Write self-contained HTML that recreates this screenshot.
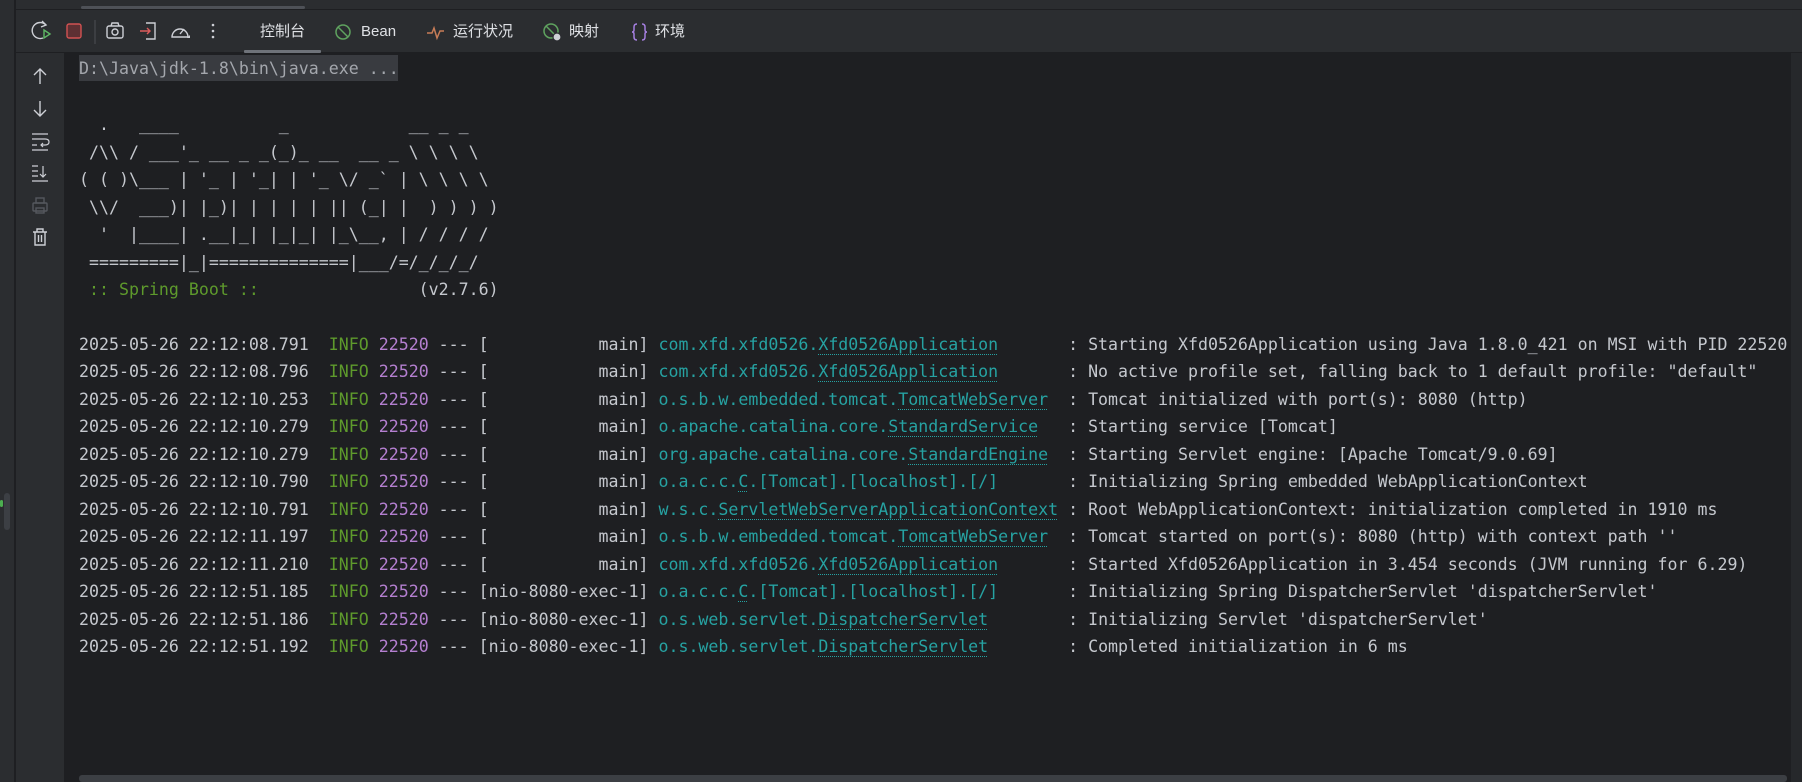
<!DOCTYPE html>
<html><head><meta charset="utf-8"><style>
*{margin:0;padding:0;box-sizing:border-box}
body{width:1802px;height:782px;overflow:hidden;background:#1e1f22;position:relative;font-family:"DejaVu Sans Mono","Liberation Mono",monospace}
.abs{position:absolute}
#leftstrip{left:0;top:0;width:15px;height:782px;background:#2b2d30;border-right:1px solid #1e1f22}
#topbar{left:16px;top:0;width:1786px;height:10px;background:#2b2d30;border-bottom:1px solid #1e1f22}
#thumb{left:81px;top:6px;width:224px;height:3px;background:#4e5157;border-radius:2px}
#toolbar{left:16px;top:10px;width:1786px;height:43px;background:#2b2d30;border-bottom:1px solid #1e1f22}
#side{left:16px;top:53px;width:48px;height:729px;background:#2b2d30}
.tab{position:absolute;top:20px;font-family:"Liberation Sans","Noto Sans CJK SC",sans-serif;font-size:15px;color:#dfe1e5;line-height:24px}
#uline{left:244px;top:50px;width:77px;height:3px;background:#6f737a;border-radius:1px}
.ln{position:absolute;left:79px;height:27.5px;line-height:27.5px;font-size:16.6px;white-space:pre;color:#c5c8ce}
.g{color:#5e9a2c}.p{color:#b47fd0}.t{color:#26a2a2}
.u{text-decoration:underline dotted;text-underline-offset:4px;text-decoration-thickness:1px}
#hl{left:79px;top:55px;width:319px;height:26px;background:#393b40}
#hscroll{left:79px;top:775px;width:1708px;height:7px;background:#3c3f44;border-radius:3px}
#vscroll{left:1791px;top:53px;width:11px;height:729px;background:#26282b}
svg{position:absolute;overflow:visible}
</style></head><body>
<div class="abs" id="leftstrip"></div>
<div class="abs" style="left:4px;top:493px;width:6px;height:37px;background:#3c3f44;border-radius:3px"></div>
<div class="abs" style="left:0;top:500px;width:3px;height:7px;background:#4caf50;border-radius:2px"></div>
<div class="abs" id="topbar"></div>
<div class="abs" id="thumb"></div>
<div class="abs" id="toolbar"></div>
<div class="abs" id="side"></div>
<div class="abs" id="vscroll"></div>

<svg style="left:0;top:0" width="260" height="60">
 <g fill="none" stroke-width="1.4">
  <path d="M46 25 A8 8 0 1 0 43 38" stroke="#ced0d6"/>
  <path d="M42 21 L46 25 L41 27" stroke="#ced0d6"/>
  <path d="M44 30 L50 34 L44 38 Z" stroke="#5fb865"/>
  <rect x="67" y="24" width="14" height="14" rx="2" fill="#5e3033" stroke="#d25252"/>
  <line x1="95" y1="20" x2="95" y2="44" stroke="#43454a"/>
  <rect x="107" y="26" width="16" height="12" rx="2" stroke="#ced0d6"/>
  <path d="M111 26 L112 23 H118 L119 26" stroke="#ced0d6"/>
  <circle cx="115" cy="32" r="3" stroke="#ced0d6"/>
  <path d="M146 23 H155 V39 H146" stroke="#ced0d6"/>
  <path d="M140 31 H150 M147 28 L150 31 L147 34" stroke="#db5c5c"/>
  <path d="M172 37 A8 8 0 1 1 188 37 Z" stroke="#ced0d6"/>
  <path d="M180 34 L184 29" stroke="#ced0d6"/>
 </g>
 <path d="M187 38 L190 38 L190 35 Z" fill="#ced0d6"/>
 <circle cx="213" cy="25" r="1.3" fill="#ced0d6"/><circle cx="213" cy="31" r="1.3" fill="#ced0d6"/><circle cx="213" cy="37" r="1.3" fill="#ced0d6"/>
</svg>
<div class="abs" id="uline"></div>
<div class="tab" style="left:260px">控制台</div>
<svg style="left:0;top:0" width="700" height="60">
 <g fill="none" stroke-width="1.5">
  <circle cx="343" cy="32" r="7" stroke="#5fa35f"/><path d="M338 27 L348 37" stroke="#5fa35f"/>
  <path d="M427 33 H432 L434 28 L437 38 L440 31 H444" stroke="#c77c57"/>
  <circle cx="551" cy="31" r="7" stroke="#5fa35f"/><path d="M546 26 L556 36" stroke="#5fa35f"/>
  <path d="M637 24 Q634 24 634 27 V30 Q634 32 632 32 Q634 32 634 34 V37 Q634 40 637 40 M642 24 Q645 24 645 27 V30 Q645 32 647 32 Q645 32 645 34 V37 Q645 40 642 40" stroke="#a57fe0"/>
 </g>
 <circle cx="557" cy="37" r="4" fill="#ced0d6" stroke="#2b2d30" stroke-width="1.2"/>
</svg>
<div class="tab" style="left:361px">Bean</div>
<div class="tab" style="left:453px">运行状况</div>
<div class="tab" style="left:569px">映射</div>
<div class="tab" style="left:655px">环境</div>

<svg style="left:0;top:0" width="70" height="260">
 <g fill="none" stroke="#ced0d6" stroke-width="1.4">
  <path d="M40 84 V69 M34 75 L40 69 L46 75"/>
  <path d="M40 101 V116 M34 110 L40 116 L46 110"/>
  <path d="M32 134 H48 M32 139 H45 Q49 139 49 142 Q49 145 45 145 H41 M43 143 L41 145 L43 147 M32 145 H37 M32 150 H48" stroke-width="1.2"/>
  <path d="M32 166 H38 M32 171 H38 M32 176 H38 M32 181 H48 M43 166 V177 M40 174 L43 177 L46 174" stroke-width="1.2"/>
  <g stroke="#55585e"><rect x="33" y="203" width="14" height="8" rx="1"/><rect x="36" y="198" width="8" height="5"/><rect x="36" y="208" width="8" height="5"/></g>
  <path d="M33 232 H47 M37 232 V229 H43 V232 M35 232 V245 H45 V232 M38.5 235 V242 M41.5 235 V242"/>
 </g>
</svg>

<div class="abs" id="hl"></div>
<div class="ln" style="top:55px;color:#a4a7ad">D:\Java\jdk-1.8\bin\java.exe ...</div>
<div class="ln" style="top:111px">  .   ____          _            __ _ _</div>
<div class="ln" style="top:138.5px"> /\\ / ___'_ __ _ _(_)_ __  __ _ \ \ \ \</div>
<div class="ln" style="top:166px">( ( )\___ | '_ | '_| | '_ \/ _` | \ \ \ \</div>
<div class="ln" style="top:193.5px"> \\/  ___)| |_)| | | | | || (_| |  ) ) ) )</div>
<div class="ln" style="top:221px">  '  |____| .__|_| |_|_| |_\__, | / / / /</div>
<div class="ln" style="top:248.5px"> =========|_|==============|___/=/_/_/_/</div>
<div class="ln" style="top:276px"><span class="g"> :: Spring Boot :: </span>               (v2.7.6)</div>

<div class="ln" style="top:330.5px">2025-05-26 22:12:08.791  <span class="g">INFO</span> <span class="p">22520</span> --- [           main] <span class="t">com.xfd.xfd0526.<span class="u">Xfd0526Application</span></span>       : Starting Xfd0526Application using Java 1.8.0_421 on MSI with PID 22520</div>
<div class="ln" style="top:358px">2025-05-26 22:12:08.796  <span class="g">INFO</span> <span class="p">22520</span> --- [           main] <span class="t">com.xfd.xfd0526.<span class="u">Xfd0526Application</span></span>       : No active profile set, falling back to 1 default profile: "default"</div>
<div class="ln" style="top:385.5px">2025-05-26 22:12:10.253  <span class="g">INFO</span> <span class="p">22520</span> --- [           main] <span class="t">o.s.b.w.embedded.tomcat.<span class="u">TomcatWebServer</span></span>  : Tomcat initialized with port(s): 8080 (http)</div>
<div class="ln" style="top:413px">2025-05-26 22:12:10.279  <span class="g">INFO</span> <span class="p">22520</span> --- [           main] <span class="t">o.apache.catalina.core.<span class="u">StandardService</span></span>   : Starting service [Tomcat]</div>
<div class="ln" style="top:440.5px">2025-05-26 22:12:10.279  <span class="g">INFO</span> <span class="p">22520</span> --- [           main] <span class="t">org.apache.catalina.core.<span class="u">StandardEngine</span></span>  : Starting Servlet engine: [Apache Tomcat/9.0.69]</div>
<div class="ln" style="top:468px">2025-05-26 22:12:10.790  <span class="g">INFO</span> <span class="p">22520</span> --- [           main] <span class="t">o.a.c.c.<span class="u">C</span>.[Tomcat].[localhost].[/]</span>       : Initializing Spring embedded WebApplicationContext</div>
<div class="ln" style="top:495.5px">2025-05-26 22:12:10.791  <span class="g">INFO</span> <span class="p">22520</span> --- [           main] <span class="t">w.s.c.<span class="u">ServletWebServerApplicationContext</span></span> : Root WebApplicationContext: initialization completed in 1910 ms</div>
<div class="ln" style="top:523px">2025-05-26 22:12:11.197  <span class="g">INFO</span> <span class="p">22520</span> --- [           main] <span class="t">o.s.b.w.embedded.tomcat.<span class="u">TomcatWebServer</span></span>  : Tomcat started on port(s): 8080 (http) with context path ''</div>
<div class="ln" style="top:550.5px">2025-05-26 22:12:11.210  <span class="g">INFO</span> <span class="p">22520</span> --- [           main] <span class="t">com.xfd.xfd0526.<span class="u">Xfd0526Application</span></span>       : Started Xfd0526Application in 3.454 seconds (JVM running for 6.29)</div>
<div class="ln" style="top:578px">2025-05-26 22:12:51.185  <span class="g">INFO</span> <span class="p">22520</span> --- [nio-8080-exec-1] <span class="t">o.a.c.c.<span class="u">C</span>.[Tomcat].[localhost].[/]</span>       : Initializing Spring DispatcherServlet 'dispatcherServlet'</div>
<div class="ln" style="top:605.5px">2025-05-26 22:12:51.186  <span class="g">INFO</span> <span class="p">22520</span> --- [nio-8080-exec-1] <span class="t">o.s.web.servlet.<span class="u">DispatcherServlet</span></span>        : Initializing Servlet 'dispatcherServlet'</div>
<div class="ln" style="top:633px">2025-05-26 22:12:51.192  <span class="g">INFO</span> <span class="p">22520</span> --- [nio-8080-exec-1] <span class="t">o.s.web.servlet.<span class="u">DispatcherServlet</span></span>        : Completed initialization in 6 ms</div>

<div class="abs" id="hscroll"></div>
</body></html>
